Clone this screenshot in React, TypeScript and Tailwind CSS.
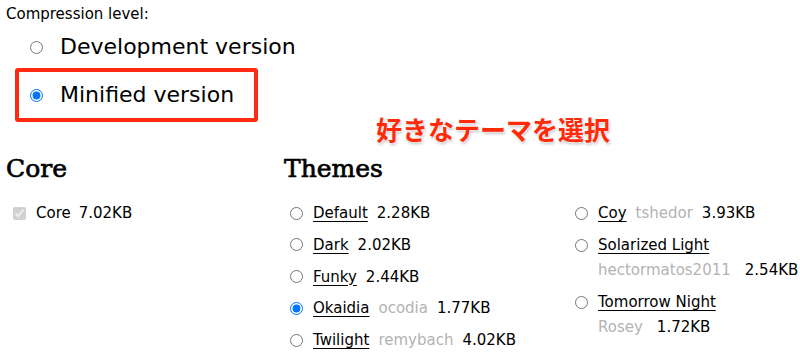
import React from "react";

const sans = { fontFamily: '"DejaVu Sans", "Noto Sans", sans-serif' };
const slab = { fontFamily: '"DejaVu Serif", serif' };

function Radio({ checked }: { checked?: boolean }) {
  return (
    <input
      type="radio"
      readOnly
      checked={!!checked}
      className="m-0 h-[13px] w-[13px] shrink-0"
    />
  );
}

function Theme({
  name,
  author,
  size,
  checked,
  wrap,
}: {
  name: string;
  author?: string;
  size: string;
  checked?: boolean;
  wrap?: boolean;
}) {
  return (
    <div className="flex items-start gap-[10px]">
      <div className="flex h-[20px] items-center">
        <Radio checked={checked} />
      </div>
      {wrap ? (
        <div className="flex flex-col leading-[20px]">
          <span className="underline underline-offset-[3px]">{name}</span>
          <span className="mt-[5px]">
            <span className="text-[#b3b3b3]">{author}</span>
            <span className="ml-[14px]">{size}</span>
          </span>
        </div>
      ) : (
        <div className="leading-[20px]">
          <span className="underline underline-offset-[3px]">{name}</span>
          {author && <span className="ml-[9px] text-[#b3b3b3]">{author}</span>}
          <span className="ml-[9px]">{size}</span>
        </div>
      )}
    </div>
  );
}

export default function App() {
  return (
    <div
      className="relative h-[355px] w-[800px] overflow-hidden bg-white text-black"
      style={sans}
    >
      <div className="px-[6px] pt-[4px] text-[15px] leading-[20px]">
        Compression level:
      </div>
      <div className="mt-[8px] flex items-center gap-[17px] pl-[30px] text-[22px] leading-[30px]">
        <Radio />
        <span>Development version</span>
      </div>
      <div className="ml-[15px] mt-[6px] flex h-[54px] w-[243px] items-center gap-[17px] rounded-[3px] border-[4px] border-[#ff2a12] pl-[11px] text-[22px] leading-[30px]">
        <Radio checked />
        <span>Minified version</span>
      </div>

      <div
        className="absolute left-[376px] top-[111px] text-[26px] font-bold leading-[36px] text-[#ff2a0a]"
        style={{
          fontFamily: '"Noto Sans CJK JP", sans-serif',
          textShadow:
            "0 0 2px #fff, 0 0 2px #fff, 1px 2px 3px rgba(0,0,0,0.25)",
        }}
      >
        好きなテーマを選択
      </div>

      <div className="mt-[31px] flex pl-[6px]">
        <div className="w-[278px]">
          <h2
            className="text-[25px] leading-[32px] [-webkit-text-stroke:0.7px_black]"
            style={slab}
          >
            Core
          </h2>
          <div className="mt-[18px] flex items-center gap-[10px] pl-[7px] text-[15px] leading-[20px]">
            <input
              type="checkbox"
              checked
              disabled
              readOnly
              className="m-0 h-[13px] w-[13px]"
            />
            <span>
              Core<span className="ml-[8px]">7.02KB</span>
            </span>
          </div>
        </div>
        <div className="flex-1">
          <h2
            className="text-[25px] leading-[32px] [-webkit-text-stroke:0.7px_black]"
            style={slab}
          >
            Themes
          </h2>
          <div className="mt-[18px] flex pl-[6px] text-[15px]">
            <div className="flex w-[285px] flex-col gap-[11.75px]">
              <Theme name="Default" size="2.28KB" />
              <Theme name="Dark" size="2.02KB" />
              <Theme name="Funky" size="2.44KB" />
              <Theme name="Okaidia" author="ocodia" size="1.77KB" checked />
              <Theme name="Twilight" author="remybach" size="4.02KB" />
            </div>
            <div className="flex flex-col gap-[12px]">
              <Theme name="Coy" author="tshedor" size="3.93KB" />
              <Theme
                name="Solarized Light"
                author="hectormatos2011"
                size="2.54KB"
                wrap
              />
              <Theme name="Tomorrow Night" author="Rosey" size="1.72KB" wrap />
            </div>
          </div>
        </div>
      </div>
    </div>
  );
}
